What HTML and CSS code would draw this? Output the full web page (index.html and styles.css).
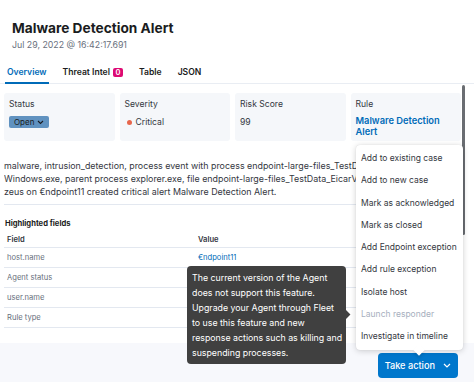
FILE: index.html
```html
<!DOCTYPE html>
<html lang="en">

<head>
  <meta charset="UTF-8">
  <meta name="viewport" content="width=device-width, initial-scale=1.0">
  <title>Malware Detection Alert</title>
  <link rel="stylesheet" href="styles.css">
</head>

<body>

  <div class="flyout">
    <!-- header -->
    <div class="flyout-header">
      <h2 class="title">Malware Detection Alert</h2>
      <div class="date">Jul 29, 2022 @ 16:42:17.691</div>
      <div class="tabs">
        <span class="tab active">Overview</span>
        <span class="tab">Threat Intel <span class="count">0</span></span>
        <span class="tab">Table</span>
        <span class="tab">JSON</span>
      </div>
    </div>

    <!-- body -->
    <div class="flyout-body">
      <div class="cards">
        <div class="card">
          <div class="card-label">Status</div>
          <div class="card-value">
            <span class="status-badge">Open
              <svg width="7" height="5" viewBox="0 0 7 5"><polyline points="1,1 3.5,3.5 6,1" fill="none" stroke="#1a1c21" stroke-width="1.1"/></svg>
            </span>
          </div>
        </div>
        <div class="card">
          <div class="card-label">Severity</div>
          <div class="card-value"><span class="dot"></span>Critical</div>
        </div>
        <div class="card">
          <div class="card-label">Risk Score</div>
          <div class="card-value">99</div>
        </div>
        <div class="card">
          <div class="card-label">Rule</div>
          <div class="card-value rule-link">Malware Detection<br>Alert</div>
        </div>
      </div>

      <p class="reason">malware, intrusion_detection, process event with process endpoint-large-files_TestData_EicarVariant<br>
        Windows.exe, parent process explorer.exe, file endpoint-large-files_TestData_EicarVariant_Windows.exe, by<br>
        zeus on €ndpoint11 created critical alert Malware Detection Alert.</p>

      <hr class="divider">

      <h3 class="section-title">Highlighted fields</h3>
      <table class="fields">
        <thead>
          <tr><th class="col-field">Field</th><th>Value</th></tr>
        </thead>
        <tbody>
          <tr><td>host.name</td><td class="link">€ndpoint11</td></tr>
          <tr><td>Agent status</td><td></td></tr>
          <tr><td>user.name</td><td></td></tr>
          <tr><td>Rule type</td><td></td></tr>
        </tbody>
      </table>
    </div>

    <!-- footer -->
    <div class="flyout-footer">
      <button class="take-action">Take action
        <svg width="8" height="5" viewBox="0 0 8 5"><polyline points="1,1 4,4 7,1" fill="none" stroke="#fff" stroke-width="1.2"/></svg>
      </button>
    </div>

    <div class="scroll-thumb"></div>

    <!-- take action menu -->
    <div class="action-menu">
      <div class="menu-item">Add to existing case</div>
      <div class="menu-item">Add to new case</div>
      <div class="menu-item">Mark as acknowledged</div>
      <div class="menu-item">Mark as closed</div>
      <div class="menu-item">Add Endpoint exception</div>
      <div class="menu-item">Add rule exception</div>
      <div class="menu-item">Isolate host</div>
      <div class="menu-item disabled">Launch responder</div>
      <div class="menu-item">Investigate in timeline</div>
    </div>

    <!-- tooltip for disabled item -->
    <div class="tooltip">The current version of the Agent<br>
      does not support this feature.<br>
      Upgrade your Agent through Fleet<br>
      to use this feature and new<br>
      response actions such as killing and<br>
      suspending processes.</div>
  </div>

</body>

</html>
```

FILE: styles.css
```css
body {
  margin: 0;
  font-family: Inter, "Noto Sans", sans-serif;
  color: #343741;
  background: #fff;
}

.flyout {
  position: relative;
  width: 474px;
  height: 382px;
  overflow: hidden;
  display: flex;
  flex-direction: column;
}

/* header */

.flyout-header {
  padding-top: 19px;
}

.title {
  margin: 0;
  padding-left: 12px;
  font-size: 13.7px;
  line-height: 18px;
  font-weight: 700;
  color: #1a1c21;
}

.date {
  padding-left: 12px;
  margin-top: 1px;
  font-size: 8.8px;
  line-height: 13px;
  color: #69707d;
}

.tabs {
  display: flex;
  gap: 12px;
  margin-top: 10px;
  padding-left: 5px;
  border-bottom: 1px solid #e9edf3;
}

.tab {
  display: flex;
  align-items: center;
  gap: 3px;
  padding: 4px 2px 3px;
  font-size: 8.6px;
  line-height: 14px;
  font-weight: 600;
  color: #1a1c21;
  border-bottom: 2px solid transparent;
  margin-bottom: -1px;
}

.tab.active {
  color: #006bb8;
  border-bottom-color: #006bb8;
}

.count {
  display: inline-block;
  background: #dd0a73;
  color: #fff;
  font-size: 7.5px;
  line-height: 9px;
  padding: 0 2px;
  border-radius: 2px;
  min-width: 6px;
  text-align: center;
}

/* body */

.flyout-body {
  padding: 9px 13px 0 4px;
  flex: 1;
}

.cards {
  display: grid;
  grid-template-columns: repeat(4, 1fr);
  gap: 5px;
}

.card {
  height: 48px;
  box-sizing: border-box;
  padding: 5px 5px;
  background: #f5f7fa;
  border-radius: 3px;
  font-size: 8.6px;
  line-height: 13px;
}

.card-label {
  color: #343741;
}

.card-value {
  margin-top: 5px;
  display: flex;
  align-items: center;
}

.status-badge {
  display: inline-flex;
  align-items: center;
  gap: 3px;
  background: #6092c0;
  color: #1a1c21;
  font-size: 8px;
  line-height: 12px;
  padding: 0 5px;
  border-radius: 2px;
}

.dot {
  width: 5px;
  height: 5px;
  border-radius: 50%;
  background: #e7664c;
  margin: 0 4px 0 2px;
}

.rule-link {
  display: block;
  margin-top: 5px;
  color: #006bb8;
  font-size: 9.3px;
  font-weight: 600;
  line-height: 10.5px;
}

.reason {
  margin: 18px 0 0;
  font-size: 8.9px;
  line-height: 13px;
  white-space: nowrap;
  overflow: hidden;
  color: #343741;
}

.divider {
  margin: 6px 0 0;
  border: 0;
  border-top: 1px solid #e3e8f0;
}

.section-title {
  margin: 13px 0 0 1px;
  font-size: 7.6px;
  line-height: 12px;
  font-weight: 700;
  color: #1a1c21;
}

.fields {
  width: 100%;
  margin-top: 1px;
  border-collapse: collapse;
  font-size: 7.6px;
}

.fields th {
  text-align: left;
  font-weight: 600;
  color: #343741;
  height: 16px;
  padding: 0 3px;
  border-bottom: 1px solid #e3e8f0;
}

.fields .col-field {
  width: 185px;
}

.fields td {
  height: 19px;
  padding: 0 3px;
  color: #69707d;
  border-bottom: 1px solid #e3e8f0;
}

.fields td.link {
  color: #006bb8;
}

/* footer */

.flyout-footer {
  height: 39px;
  box-sizing: border-box;
  background: #f7f8fc;
  display: flex;
  justify-content: flex-end;
  align-items: flex-start;
  padding: 10px 16px 0 0;
}

.take-action {
  display: flex;
  align-items: center;
  gap: 8px;
  height: 25px;
  padding: 0 7px 0 7px;
  border: 0;
  border-radius: 4px;
  background: #0077cc;
  color: #fff;
  font-family: inherit;
  font-size: 9.2px;
  font-weight: 500;
}

/* overlays */

.scroll-thumb {
  position: absolute;
  left: 462px;
  top: 85px;
  width: 3px;
  height: 150px;
  border-radius: 2px;
  background: #6a6d72;
}

.action-menu {
  position: absolute;
  left: 356px;
  top: 145px;
  width: 107px;
  padding: 2px 0;
  background: #fff;
  border-radius: 4px;
  box-shadow: 0 1px 6px rgba(0, 0, 0, 0.18), 0 0 1px rgba(0, 0, 0, 0.15);
}

.action-menu::after {
  content: "";
  position: absolute;
  left: 59px;
  bottom: -4px;
  width: 8px;
  height: 8px;
  background: #fff;
  transform: rotate(45deg);
  box-shadow: 2px 2px 3px rgba(0, 0, 0, 0.1);
}

.menu-item {
  height: 22.3px;
  line-height: 22.3px;
  padding-left: 5px;
  font-size: 8.5px;
  color: #343741;
  white-space: nowrap;
}

.menu-item.disabled {
  color: #a7afbe;
}

.tooltip {
  position: absolute;
  left: 187px;
  top: 266px;
  width: 159px;
  box-sizing: border-box;
  padding: 4px 5px;
  background: #404040;
  color: #fff;
  border-radius: 4px;
  font-size: 8.8px;
  line-height: 15px;
  white-space: nowrap;
}

.tooltip::after {
  content: "";
  position: absolute;
  right: -3px;
  top: 45px;
  width: 7px;
  height: 7px;
  background: #404040;
  transform: rotate(45deg);
}
```
